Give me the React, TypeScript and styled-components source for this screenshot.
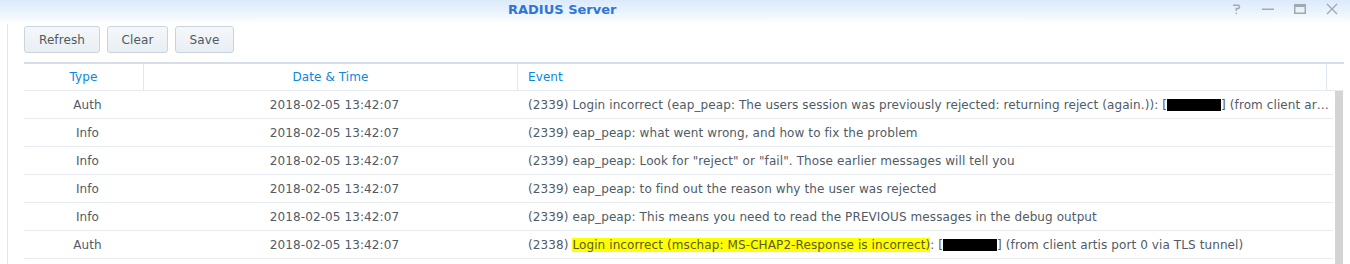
import React from "react";
import styled, { createGlobalStyle } from "styled-components";

const Global = createGlobalStyle`
  html, body { margin: 0; padding: 0; background: #ffffff; }
  body { font-family: "DejaVu Sans", Verdana, sans-serif; font-size: 12px; letter-spacing: 0.1px; color: #4f5b66; }
  * { box-sizing: border-box; }
`;

const Window = styled.div`
  width: 1350px;
  height: 264px;
  overflow: hidden;
  background: #fff;
  display: flex;
  flex-direction: column;
`;

const TitleBar = styled.div`
  height: 24px;
  flex: none;
  display: flex;
  align-items: center;
  background: linear-gradient(to bottom, #dbeafa 0%, #eef5fd 60%, #ffffff 100%);
`;

const Title = styled.div`
  margin-left: 508px;
  margin-top: -6px;
  font-family: "DejaVu Sans", Verdana, sans-serif;
  font-weight: bold;
  font-size: 13px;
  letter-spacing: 0;
  color: #3174d6;
`;

const Controls = styled.div`
  margin-left: auto;
  margin-right: 12px;
  margin-top: -6px;
  display: flex;
  gap: 20px;
  align-items: center;
`;

const Body = styled.div`
  flex: 1;
  margin-left: 7px;
  border-left: 1px solid #e3e5e8;
  padding-left: 16px;
  padding-top: 2px;
  display: flex;
  flex-direction: column;
`;

const Toolbar = styled.div`
  display: flex;
  gap: 7px;
  height: 27px;
  margin-bottom: 9px;
`;

const Button = styled.button<{ $w: number }>`
  width: ${(p) => p.$w}px;
  height: 27px;
  border: 1px solid #c9d4de;
  border-radius: 3px;
  background: linear-gradient(to bottom, #f5f8fa, #e9eef3);
  font-family: "DejaVu Sans", Verdana, sans-serif;
  font-size: 12px;
  letter-spacing: 0.1px;
  color: #505a64;
  padding: 0;
  padding-top: 1px;
`;

const Table = styled.div`
  width: 1320px;
  display: flex;
  flex-direction: column;
`;

const HeaderRow = styled.div`
  display: grid;
  grid-template-columns: 120px 374px 809px 16px;
  height: 29px;
  border-top: 2px solid #d5dfe9;
  border-bottom: 1px solid #e4eaf0;
`;

const HeadCell = styled.div<{ $align?: string; $last?: boolean }>`
  display: flex;
  align-items: center;
  justify-content: ${(p) => p.$align || "center"};
  padding-left: ${(p) => (p.$align === "flex-start" ? "10px" : "0")};
  color: #0a86e4;
  border-right: ${(p) => (p.$last ? "none" : "1px solid #dfe7f0")};
`;

const RowsArea = styled.div`
  display: flex;
  gap: 2px;
`;

const Rows = styled.div`
  width: 1309px;
  display: flex;
  flex-direction: column;
`;

const Scrollbar = styled.div`
  width: 8px;
  height: 180px;
  background: #d4d4d4;
`;

const Row = styled.div`
  display: grid;
  grid-template-columns: 120px 374px 815px;
  height: 28px;
  border-bottom: 1px solid #e6ebf0;
`;

const Cell = styled.div<{ $event?: boolean }>`
  display: flex;
  align-items: center;
  justify-content: ${(p) => (p.$event ? "flex-start" : "center")};
  padding-left: ${(p) => (p.$event ? "10px" : "7px")};
  padding-right: ${(p) => (p.$event ? "4px" : "0")};
  white-space: nowrap;
  overflow: hidden;
  min-width: 0;
`;

const EventText = styled.span`
  display: block;
  overflow: hidden;
  text-overflow: ellipsis;
  white-space: nowrap;
  max-width: 100%;
`;

const Redacted = styled.span`
  display: inline-block;
  width: 54px;
  height: 12px;
  background: #000;
  vertical-align: -2px;
`;

const Mark = styled.span`
  background: #ffff00;
  color: #5a5a2a;
`;

const IconSvg = styled.svg`
  display: block;
`;

const Help = () => (
  <IconSvg width="12" height="12" viewBox="0 0 12 12">
    <path d="M3 2.2 H8.5 L9.5 3.2 V4.5 L8.5 5.5 H6.3 V8" fill="none" stroke="#a3a8ad" strokeWidth="1.4" />
    <rect x="5.6" y="9.6" width="1.4" height="1.5" fill="#a3a8ad" />
  </IconSvg>
);
const Minimize = () => (
  <IconSvg width="12" height="12" viewBox="0 0 12 12">
    <rect x="0" y="5.5" width="12" height="1.5" fill="#a3a8ad" />
  </IconSvg>
);
const Maximize = () => (
  <IconSvg width="12" height="12" viewBox="0 0 12 12">
    <rect x="0.75" y="1.75" width="10.5" height="8.5" fill="none" stroke="#a3a8ad" strokeWidth="1.5" />
    <rect x="0.5" y="1.5" width="11" height="2.5" fill="#a3a8ad" />
  </IconSvg>
);
const Close = () => (
  <IconSvg width="12" height="12" viewBox="0 0 12 12">
    <path d="M1 1 L11 11 M11 1 L1 11" stroke="#a3a8ad" strokeWidth="1.4" />
  </IconSvg>
);

const rows: { type: string; event: React.ReactNode }[] = [
  {
    type: "Auth",
    event: (
      <>
        (2339) Login incorrect (eap_peap: The users session was previously rejected: returning reject (again.)): [<Redacted />] (from client artis port 0 via TLS tunnel)
      </>
    ),
  },
  { type: "Info", event: "(2339) eap_peap: what went wrong, and how to fix the problem" },
  { type: "Info", event: '(2339) eap_peap: Look for "reject" or "fail". Those earlier messages will tell you' },
  { type: "Info", event: "(2339) eap_peap: to find out the reason why the user was rejected" },
  { type: "Info", event: "(2339) eap_peap: This means you need to read the PREVIOUS messages in the debug output" },
  {
    type: "Auth",
    event: (
      <>
        (2338) <Mark>Login incorrect (mschap: MS-CHAP2-Response is incorrect)</Mark>: [<Redacted />] (from client artis port 0 via TLS tunnel)
      </>
    ),
  },
];

export default function App() {
  return (
    <>
      <Global />
      <Window>
        <TitleBar>
          <Title>RADIUS Server</Title>
          <Controls>
            <Help />
            <Minimize />
            <Maximize />
            <Close />
          </Controls>
        </TitleBar>
        <Body>
          <Toolbar>
            <Button $w={76}>Refresh</Button>
            <Button $w={61}>Clear</Button>
            <Button $w={59}>Save</Button>
          </Toolbar>
          <Table>
            <HeaderRow>
              <HeadCell>Type</HeadCell>
              <HeadCell>Date &amp; Time</HeadCell>
              <HeadCell $align="flex-start">Event</HeadCell>
              <HeadCell $last />
            </HeaderRow>
            <RowsArea>
              <Rows>
                {rows.map((r, i) => (
                  <Row key={i}>
                    <Cell>{r.type}</Cell>
                    <Cell>2018-02-05 13:42:07</Cell>
                    <Cell $event>
                      <EventText>{r.event}</EventText>
                    </Cell>
                  </Row>
                ))}
              </Rows>
              <Scrollbar />
            </RowsArea>
          </Table>
        </Body>
      </Window>
    </>
  );
}
